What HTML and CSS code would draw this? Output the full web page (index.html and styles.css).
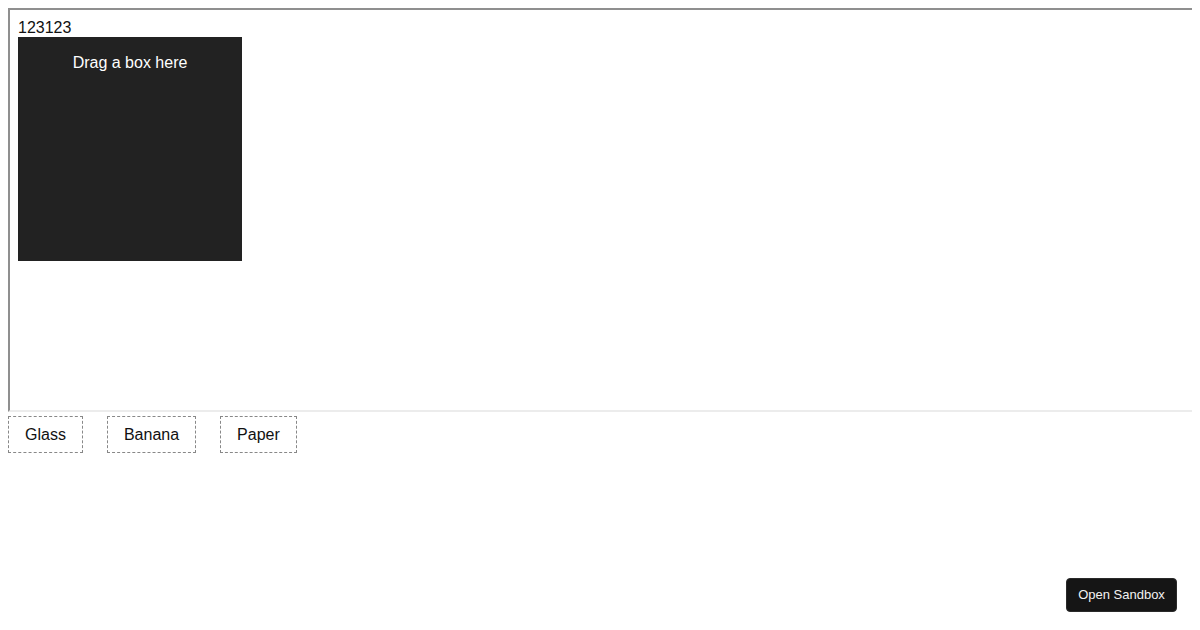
FILE: index.html
```html
<!DOCTYPE html>
<html lang="en">

<head>
  <meta charset="UTF-8">
  <meta name="viewport" content="width=device-width, initial-scale=1.0">
  <title>Drag and drop</title>
  <link rel="stylesheet" href="styles.css">
</head>

<body>
  <div class="board">
    <div class="label">123123</div>
    <div class="dustbin">Drag a box here</div>
  </div>
  <div class="boxes">
    <div class="box">Glass</div>
    <div class="box">Banana</div>
    <div class="box">Paper</div>
  </div>
  <a class="sandbox" href="#">Open Sandbox</a>
</body>

</html>
```

FILE: styles.css
```css
html,
body {
  overflow: hidden;
}

body {
  margin: 8px;
  font-family: "Liberation Sans", Arial, sans-serif;
  font-size: 16px;
  color: #111;
}

.board {
  box-sizing: border-box;
  width: 1188px;
  height: 404px;
  padding: 8px;
  border-style: solid;
  border-width: 2px;
  border-color: #8f8f8f #ececec #ececec #8f8f8f;
}

.label {
  line-height: 19px;
}

.dustbin {
  width: 224px;
  height: 224px;
  box-sizing: border-box;
  padding-top: 16px;
  background: #222;
  color: #fff;
  text-align: center;
  line-height: 19px;
}

.boxes {
  display: flex;
  gap: 24px;
  margin-top: 4px;
}

.box {
  border: 1px dashed #888;
  padding: 8px 16px;
  line-height: 19px;
  background: #fff;
}

.sandbox {
  position: fixed;
  right: 23px;
  bottom: 18px;
  display: block;
  width: 111px;
  height: 34px;
  box-sizing: border-box;
  padding-top: 8px;
  border-radius: 4px;
  background: #151515;
  color: #f2f2f2;
  font-size: 13px;
  line-height: 16px;
  text-align: center;
  text-decoration: none;
  border: 1px solid #2a2a2a;
}
```
